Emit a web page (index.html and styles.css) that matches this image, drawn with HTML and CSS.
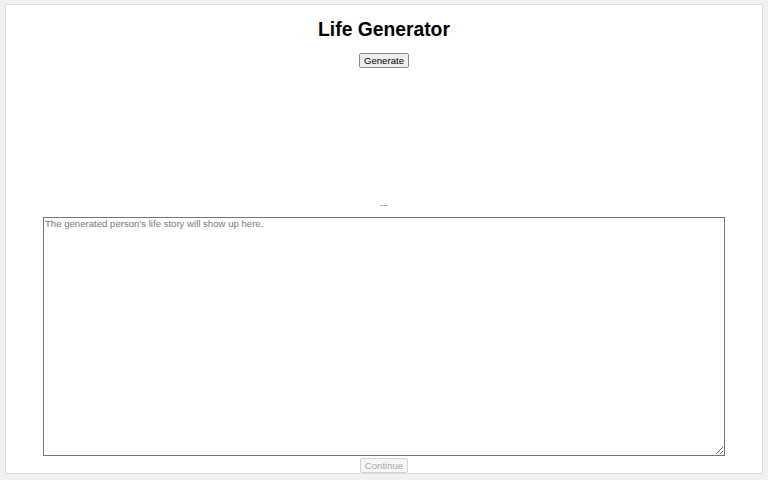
FILE: index.html
```html
<!DOCTYPE html>
<html lang="en">
<head>
    <meta charset="UTF-8">
    <meta name="viewport" content="width=device-width, initial-scale=1.0">
    <title>Life Generator</title>
    <link rel="stylesheet" href="styles.css">
</head>
<body>

<div class="container">
    <h1>Life Generator</h1>
    <button id="generateButton">Generate</button>
    <div id="portrait"></div>
    <div id="status">...</div>
    <textarea id="story" placeholder="The generated person's life story will show up here."></textarea>
    <button id="continueButton" disabled>Continue</button>
</div>

</body>
</html>
```

FILE: styles.css
```css
html, body {
    margin: 0;
    height: 100%;
}
body {
    box-sizing: border-box;
    padding: 4px 5px 6px 5px;
    font-family: "Liberation Sans", Arial, sans-serif;
    background-color: #f1f1f1;
}
.container {
    box-sizing: border-box;
    height: 470px;
    display: flex;
    flex-direction: column;
    align-items: center;
    background: white;
    border: 1px solid #dcdcdc;
}
h1 {
    margin: 14px 0 0 0;
    font-size: 19.3px;
    line-height: 22px;
    font-weight: bold;
    color: #000;
}
button {
    font-family: "Liberation Sans", Arial, sans-serif;
    font-size: 9.6px;
    line-height: 11px;
    padding: 1px 4px;
    border: 1px solid #8a8a8a;
    border-radius: 2px;
    background-color: #efefef;
    color: #000;
}
button:disabled {
    color: #a8a8a8;
    border-color: #d4d4d4;
    background-color: #f6f6f6;
}
#generateButton {
    margin-top: 12px;
}
#portrait {
    height: 130px;
}
#status {
    font-size: 9.6px;
    line-height: 12px;
    color: #333;
}
#story {
    box-sizing: border-box;
    display: block;
    width: 682px;
    height: 241px;
    margin-top: 8px;
    padding: 0 1px;
    font-family: "Liberation Sans", Arial, sans-serif;
    font-size: 9.6px;
    border: 1px solid #767676;
    border-radius: 0;
    resize: vertical;
}
#story::placeholder {
    color: #7a7a7a;
}
#continueButton {
    margin-top: 2px;
}
```
